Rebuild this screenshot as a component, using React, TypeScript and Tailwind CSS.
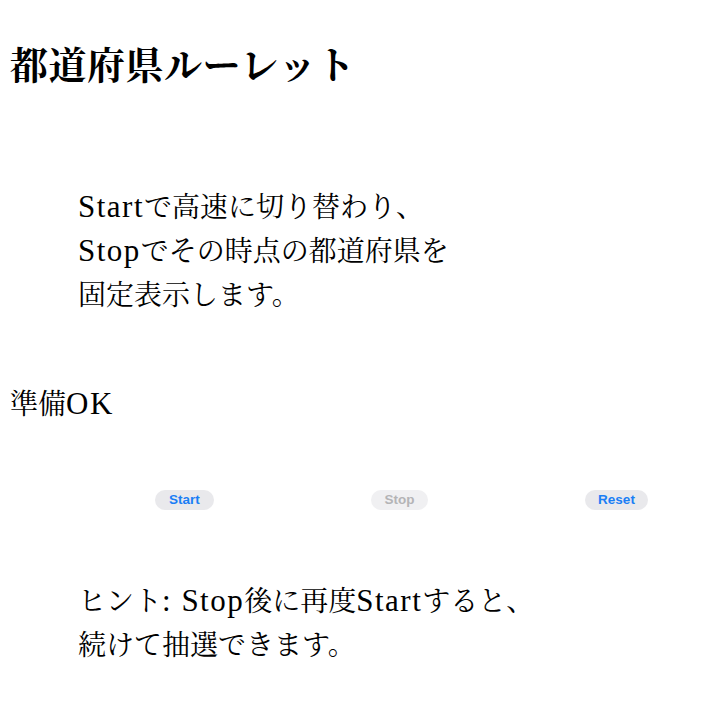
import React from "react";

const serif = '"Liberation Serif", "Noto Serif CJK JP", "Noto Sans CJK JP", serif';

function L({ children }: { children: React.ReactNode }) {
  return <span className="text-[31px] leading-none tracking-[1.5px]">{children}</span>;
}

export default function App() {
  return (
    <div className="w-[720px] h-[726px] bg-white text-black" style={{ fontFamily: serif }}>
      <h1 className="pt-[42px] pl-[10px] text-[38px] leading-[48px] font-bold tracking-[0.5px]">都道府県ルーレット</h1>
      <div className="mt-[96px] pl-[78px] text-[28px] leading-[44px]">
        <div><L>Start</L>で高速に切り替わり、</div>
        <div><L>Stop</L>でその時点の都道府県を</div>
        <div>固定表示します。</div>
      </div>
      <div className="mt-[65px] pl-[10px] text-[28px] leading-[44px]">準備<L>OK</L></div>
      <div
        className="mt-[63px] flex items-center gap-[157px] pl-[155px] text-[13.5px] font-bold leading-[20px]"
        style={{ fontFamily: '"Liberation Sans", Arial, sans-serif' }}
      >
        <button className="h-[20px] w-[59px] rounded-full bg-[#e9e9ec] text-[#1a7ef5]">Start</button>
        <button className="h-[20px] w-[57px] rounded-full bg-[#f0f0f2] text-[#b4b4b6]" disabled>Stop</button>
        <button className="h-[20px] w-[63px] rounded-full bg-[#e9e9ec] text-[#1a7ef5]">Reset</button>
      </div>
      <div className="mt-[70px] pl-[78px] text-[28px] leading-[44px]">
        <div>ヒント<L>: Stop</L>後に再度<L>Start</L>すると、</div>
        <div>続けて抽選できます。</div>
      </div>
    </div>
  );
}
